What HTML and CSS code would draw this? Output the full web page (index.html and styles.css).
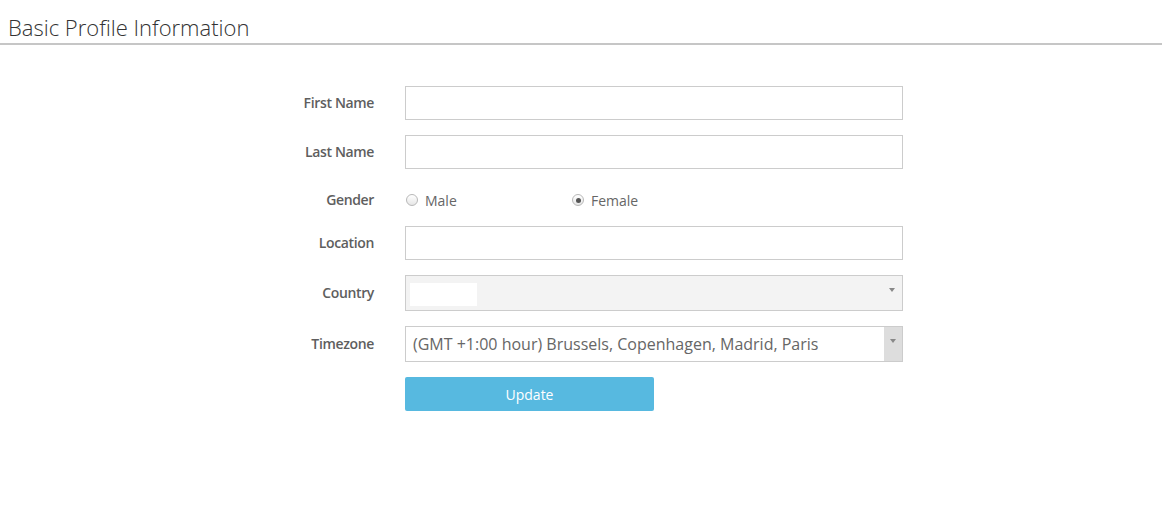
FILE: index.html
```html
<!DOCTYPE html>
<html>
<head>
<meta charset="utf-8">
<title>Basic Profile Information</title>
<link rel="stylesheet" href="styles.css">
</head>
<body>
<div class="page-header">
  <h1 class="page-title">Basic Profile Information</h1>
</div>
<form class="profile-form">
  <div class="form-row">
    <label class="form-label">First Name</label>
    <div class="form-field"><input class="text-input" type="text"></div>
  </div>
  <div class="form-row">
    <label class="form-label">Last Name</label>
    <div class="form-field"><input class="text-input" type="text"></div>
  </div>
  <div class="form-row gender-row">
    <label class="form-label">Gender</label>
    <div class="form-field radio-group">
      <span class="radio-option"><span class="radio"></span><span class="radio-text">Male</span></span>
      <span class="radio-option"><span class="radio checked"></span><span class="radio-text">Female</span></span>
    </div>
  </div>
  <div class="form-row">
    <label class="form-label">Location</label>
    <div class="form-field"><input class="text-input" type="text"></div>
  </div>
  <div class="form-row">
    <label class="form-label">Country</label>
    <div class="form-field">
      <div class="select country-select">
        <span class="placeholder-box"></span>
        <span class="caret caret-country"></span>
      </div>
    </div>
  </div>
  <div class="form-row">
    <label class="form-label">Timezone</label>
    <div class="form-field">
      <div class="select tz-select">
        <span class="select-value">(GMT +1:00 hour) Brussels, Copenhagen, Madrid, Paris</span>
        <span class="select-arrow"><span class="caret"></span></span>
      </div>
    </div>
  </div>
  <div class="form-row">
    <span class="form-label"></span>
    <div class="form-field"><button class="btn-update" type="button">Update</button></div>
  </div>
</form>
</body>
</html>
```

FILE: styles.css
```css
html, body {
  margin: 0;
  padding: 0;
  background: #ffffff;
}

body {
  font-family: "Open Sans", "Liberation Sans", sans-serif;
  color: #555555;
  width: 1162px;
  height: 518px;
  overflow: hidden;
}

.page-header {
  padding: 12px 0 1px 8px;
  border-bottom: 2px solid #c6c6c6;
}

.page-title {
  margin: 0;
  font-size: 22px;
  font-weight: 300;
  line-height: 30px;
  color: #333333;
}

.profile-form {
  margin-top: 41px;
  display: flex;
  flex-direction: column;
  gap: 15px;
}

.form-row {
  display: flex;
  align-items: center;
}

.form-label {
  flex: 0 0 374px;
  text-align: right;
  font-size: 14px;
  font-weight: 600;
  letter-spacing: -0.35px;
  color: #5e5e5e;
  line-height: 20px;
}

.form-field {
  margin-left: 31px;
  width: 498px;
}

.text-input {
  display: block;
  box-sizing: border-box;
  width: 498px;
  height: 34px;
  border: 1px solid #cccccc;
  border-radius: 0;
  margin: 0;
  padding: 6px 8px;
  font-family: inherit;
  font-size: 14px;
  background: #ffffff;
}

.gender-row {
  height: 27px;
  align-items: flex-start;
  padding-top: 6px;
  box-sizing: border-box;
}

.radio-group {
  display: grid;
  grid-template-columns: 166px 166px 166px;
}

.radio-option {
  display: flex;
  align-items: center;
  height: 20px;
}

.radio {
  box-sizing: border-box;
  width: 12px;
  height: 12px;
  border-radius: 50%;
  border: 1px solid #b8b8b8;
  background: linear-gradient(#ffffff, #e6e6e6);
  margin-left: 1px;
  margin-right: 7px;
  display: flex;
  align-items: center;
  justify-content: center;
}

.radio.checked::after {
  content: "";
  width: 5px;
  height: 5px;
  border-radius: 50%;
  background: #555555;
}

.radio-text {
  font-size: 14px;
  color: #666666;
}

.select {
  box-sizing: border-box;
  width: 498px;
  height: 36px;
  border: 1px solid #cccccc;
  display: flex;
  align-items: center;
  position: relative;
}

.country-select {
  background: #f3f3f3;
  align-items: flex-start;
}

.placeholder-box {
  display: block;
  width: 67px;
  height: 23px;
  background: #ffffff;
  margin: 7px 0 0 4px;
}

.caret {
  display: block;
  width: 0;
  height: 0;
  border-left: 3px solid transparent;
  border-right: 3px solid transparent;
  border-top: 4px solid #888888;
}

.caret-country {
  position: absolute;
  right: 7px;
  top: 12px;
}

.tz-select {
  background: #ffffff;
  align-items: stretch;
}

.select-value {
  flex: 1;
  padding-left: 7px;
  font-size: 16px;
  line-height: 34px;
  color: #666666;
  white-space: nowrap;
}

.select-arrow {
  flex: 0 0 18px;
  background: #dddddd;
  display: flex;
  justify-content: center;
  padding-top: 12px;
  box-sizing: border-box;
}

.btn-update {
  display: block;
  width: 249px;
  height: 34px;
  border: none;
  border-radius: 2px;
  background: #57b9e0;
  color: #ffffff;
  font-family: inherit;
  font-size: 14px;
  padding: 0;
  cursor: pointer;
}
```
